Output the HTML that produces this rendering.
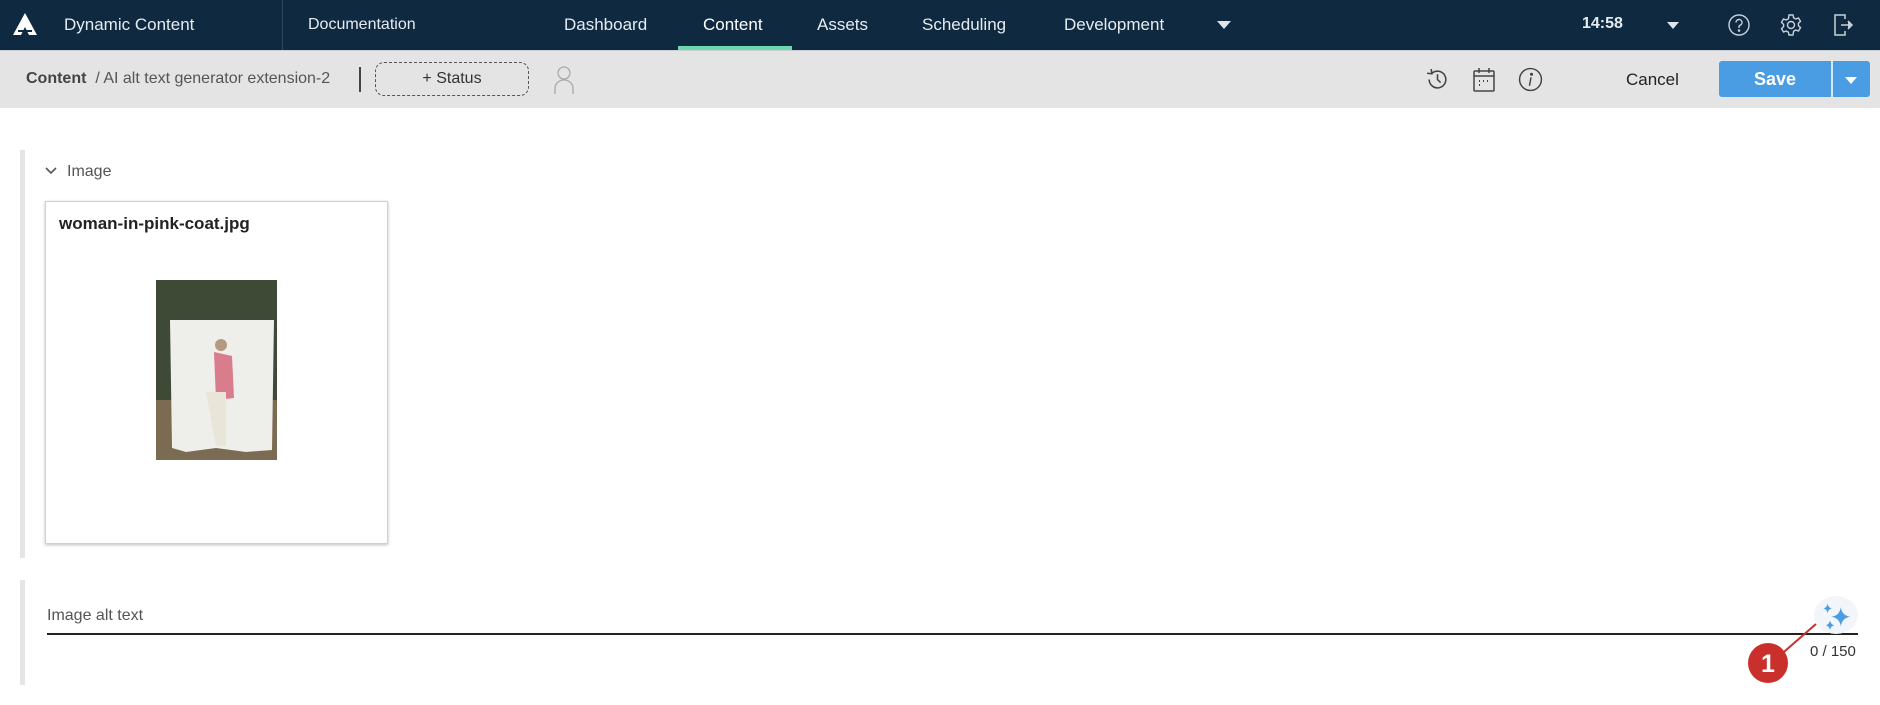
<!DOCTYPE html>
<html><head><meta charset="utf-8"><style>
*{margin:0;padding:0;box-sizing:border-box}
body{width:1880px;height:705px;background:#fff;font-family:"Liberation Sans",sans-serif;position:relative;overflow:hidden}
.a{position:absolute;white-space:nowrap}
.hdr{position:absolute;left:0;top:0;width:1880px;height:50px;background:#0f2a40}
.nav{color:#e6ebef;font-size:17px;top:15px}
.tb{position:absolute;left:0;top:50px;width:1880px;height:58px;background:#e4e4e4;border-top:1px solid #c9d0d6}
</style></head><body>
<div class="hdr"></div>
<svg class="a" style="left:12px;top:12px" width="26" height="26" viewBox="0 0 26 26"><path d="M13 1 L25 23 L17 23 L13 15 L9 23 L1 23 Z" fill="#fff"/><path d="M6 19 L20 19" stroke="#0f2a40" stroke-width="2"/></svg>
<div class="a nav" style="left:64px">Dynamic Content</div>
<div class="a" style="left:282px;top:0;width:1px;height:50px;background:#2d4a62"></div>
<div class="a nav" style="left:308px;font-size:16px;top:16px">Documentation</div>
<div class="a nav" style="left:564px">Dashboard</div>
<div class="a nav" style="left:703px;color:#fff">Content</div>
<div class="a" style="left:678px;top:46px;width:114px;height:4px;background:#6fd6b0"></div>
<div class="a nav" style="left:817px">Assets</div>
<div class="a nav" style="left:922px">Scheduling</div>
<div class="a nav" style="left:1064px">Development</div>
<div class="a" style="left:1217px;top:21px;border-left:7px solid transparent;border-right:7px solid transparent;border-top:8px solid #dfe5ea"></div>
<div class="a nav" style="left:1582px;font-weight:bold;font-size:16px;top:15px">14:58</div>
<div class="a" style="left:1667px;top:22px;border-left:6px solid transparent;border-right:6px solid transparent;border-top:7px solid #dfe5ea"></div>
<svg class="a" style="left:1727px;top:13px" width="24" height="24" viewBox="0 0 24 24" fill="none" stroke="#c8d1d9" stroke-width="1.4"><circle cx="12" cy="12" r="10"/><path d="M9 9.5a3 3 0 1 1 4 2.8c-.8.4-1 1-1 2v.7"/><circle cx="12" cy="17.5" r=".6" fill="#c8d1d9"/></svg>
<svg class="a" style="left:1779px;top:13px" width="24" height="24" viewBox="0 0 24 24" fill="none" stroke="#c8d1d9" stroke-width="1.4"><circle cx="12" cy="12" r="3.5"/><path d="M10 2h4l.6 2.8 2.2 1.2 2.7-1 2 3.4-2.1 1.9v2.4l2.1 1.9-2 3.4-2.7-1-2.2 1.2L14 22h-4l-.6-2.8-2.2-1.2-2.7 1-2-3.4 2.1-1.9v-2.4L2.5 9.4l2-3.4 2.7 1 2.2-1.2z"/></svg>
<svg class="a" style="left:1831px;top:12px" width="24" height="26" viewBox="0 0 24 26" fill="none" stroke="#c8d1d9" stroke-width="1.5"><path d="M14 7V3H4v20h10v-4"/><path d="M10 13h10M17 9l4 4-4 4" fill="#c8d1d9"/></svg>

<div class="tb"></div>
<div class="a" style="left:26px;top:70px;font-size:16px;color:#444"><b>Content</b> <span style="color:#555">&nbsp;/ AI alt text generator extension-2</span></div>
<div class="a" style="left:359px;top:67px;width:2px;height:25px;background:#444"></div>
<div class="a" style="left:375px;top:62px;width:154px;height:34px;border:1.5px dashed #555;border-radius:9px;font-size:16px;color:#333;text-align:center;line-height:31px">+ Status</div>
<svg class="a" style="left:552px;top:65px" width="24" height="30" viewBox="0 0 24 30" fill="none" stroke="#aaa" stroke-width="1.3"><circle cx="12" cy="8" r="6"/><path d="M3 29v-6a9 8 0 0 1 18 0v6"/></svg>
<svg class="a" style="left:1425px;top:67px" width="25" height="25" viewBox="0 0 24 24" fill="none" stroke="#444" stroke-width="1.5"><path d="M4 12a8 8 0 1 0 2.5-5.8"/><path d="M2 6l4.5 0.5L6 2"/><path d="M12 7v5l3 3"/></svg>
<svg class="a" style="left:1472px;top:66px" width="24" height="27" viewBox="0 0 24 27" fill="none" stroke="#444" stroke-width="1.5"><rect x="2" y="5" width="20" height="20" rx="1"/><path d="M2 10h20M7 2v5M17 2v5"/><path d="M7 15h1M11 15h1M15 15h1M7 19h1" stroke-width="2"/></svg>
<svg class="a" style="left:1518px;top:67px" width="25" height="25" viewBox="0 0 24 24" fill="none" stroke="#444" stroke-width="1.4"><circle cx="12" cy="12" r="10.5"/><path d="M12.5 10l-1.5 8"/><circle cx="13" cy="7" r=".8" fill="#444"/></svg>
<div class="a" style="left:1626px;top:70px;font-size:17px;color:#222">Cancel</div>
<div class="a" style="left:1719px;top:61px;width:151px;height:36px;background:#4a9de3;border-radius:3px"></div>
<div class="a" style="left:1831px;top:61px;width:2px;height:36px;background:#d6e8f8"></div>
<div class="a" style="left:1754px;top:69px;font-size:18px;font-weight:bold;color:#fff">Save</div>
<div class="a" style="left:1845px;top:77px;border-left:6px solid transparent;border-right:6px solid transparent;border-top:7px solid #fff"></div>

<div class="a" style="left:20px;top:150px;width:5px;height:408px;background:#e5e5e5"></div>
<svg class="a" style="left:44px;top:165px" width="14" height="12" viewBox="0 0 14 12"><path d="M2 3l5 5 5-5" fill="none" stroke="#555" stroke-width="1.6"/></svg>
<div class="a" style="left:67px;top:163px;font-size:16px;color:#555">Image</div>
<div class="a" style="left:45px;top:201px;width:343px;height:343px;border:1px solid #d0d0d0;box-shadow:0 1px 3px rgba(0,0,0,.25);background:#fff"></div>
<div class="a" style="left:59px;top:214px;font-size:17px;font-weight:bold;color:#222">woman-in-pink-coat.jpg</div>
<svg class="a" style="left:156px;top:280px" width="121" height="180" viewBox="0 0 121 180">
<rect width="121" height="180" fill="#3f4a36"/>
<rect y="120" width="121" height="60" fill="#7b6b52"/>
<path d="M14 40 L118 40 L116 170 L90 172 L60 168 L30 172 L16 168 Z" fill="#eeeeea"/>
<path d="M58 72 L76 76 L78 118 L60 120 Z" fill="#d97c8c"/>
<path d="M50 112 L70 112 L70 166 L60 166 Z" fill="#e9e5d8"/>
<circle cx="65" cy="65" r="6" fill="#b59a82"/>
</svg>

<div class="a" style="left:20px;top:580px;width:5px;height:105px;background:#e5e5e5"></div>
<div class="a" style="left:47px;top:607px;font-size:16px;color:#555">Image alt text</div>
<div class="a" style="left:47px;top:633px;width:1811px;height:2px;background:#222"></div>
<div class="a" style="left:1814px;top:596px;width:44px;height:38px;border-radius:50%;background:#f2f5f9"></div>
<svg class="a" style="left:1818px;top:600px" width="36" height="36" viewBox="0 0 30 30" fill="#4a9de3">
<path d="M19 6 Q20 13 27 14 Q20 15 19 22 Q18 15 11 14 Q18 13 19 6Z"/>
<path d="M8 3 Q8.6 6.4 11.5 7 Q8.6 7.6 8 11 Q7.4 7.6 4.5 7 Q7.4 6.4 8 3Z"/>
<path d="M10 17 Q10.6 20.4 13.5 21 Q10.6 21.6 10 25 Q9.4 21.6 6.5 21 Q9.4 20.4 10 17Z"/>
</svg>
<div class="a" style="left:1810px;top:643px;font-size:15px;color:#333">0 / 150</div>
<svg class="a" style="left:1740px;top:618px" width="90" height="70" viewBox="0 0 90 70"><path d="M76 6 L30 46" stroke="#c9302c" stroke-width="2"/><circle cx="28" cy="45" r="20" fill="#c9302c"/><text x="28" y="54" text-anchor="middle" font-family="Liberation Sans" font-weight="bold" font-size="25" fill="#fff">1</text></svg>
</body></html>
